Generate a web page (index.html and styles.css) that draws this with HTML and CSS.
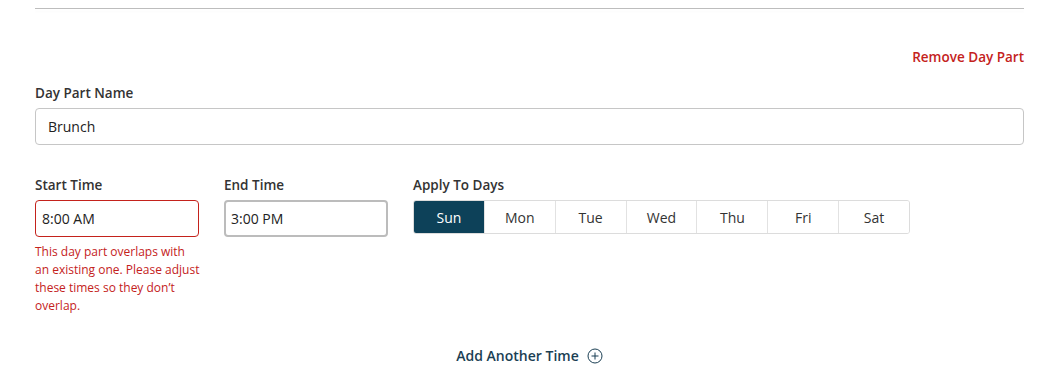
FILE: index.html
```html
<!DOCTYPE html>
<html lang="en">
<head>
    <meta charset="UTF-8">
    <meta name="viewport" content="width=device-width, initial-scale=1.0">
    <title>Day Parts</title>
    <link rel="stylesheet" href="styles.css">
</head>
<body>
    <div class="container">
        <hr class="divider">
        <div class="actions">
            <a href="#" class="remove-link">Remove Day Part</a>
        </div>
        <div class="form-group">
            <label for="dayPartName">Day Part Name</label>
            <input type="text" id="dayPartName" class="text-input" value="Brunch">
        </div>
        <div class="time-row">
            <div class="form-group time-group">
                <label for="startTime">Start Time</label>
                <input type="text" id="startTime" class="text-input time-input error" value="8:00 AM">
                <p class="error-text">This day part overlaps with an&nbsp;existing one. Please adjust these times so they don’t overlap.</p>
            </div>
            <div class="form-group time-group">
                <label for="endTime">End Time</label>
                <input type="text" id="endTime" class="text-input time-input focused" value="3:00 PM">
            </div>
            <div class="form-group">
                <label>Apply To Days</label>
                <div class="days">
                    <button type="button" class="day active">Sun</button>
                    <button type="button" class="day">Mon</button>
                    <button type="button" class="day">Tue</button>
                    <button type="button" class="day">Wed</button>
                    <button type="button" class="day">Thu</button>
                    <button type="button" class="day">Fri</button>
                    <button type="button" class="day">Sat</button>
                </div>
            </div>
        </div>
        <div class="add-row">
            <a href="#" class="add-link">Add Another Time
                <svg width="16" height="16" viewBox="0 0 16 16" fill="none" stroke="currentColor" stroke-width="1">
                    <circle cx="8" cy="8" r="7"/>
                    <path d="M8 4.5v7M4.5 8h7"/>
                </svg>
            </a>
        </div>
    </div>
</body>
</html>
```

FILE: styles.css
```css
body {
    font-family: "Open Sans", Arial, sans-serif;
    margin: 0;
    padding: 0;
    background-color: #fff;
    color: #333;
}
.container {
    padding: 8px 35px 0;
}
.divider {
    margin: 0;
    border: none;
    border-top: 1px solid #bdbdbd;
    box-shadow: 0 3px 3px rgba(0, 0, 0, 0.03);
}
.actions {
    display: flex;
    justify-content: flex-end;
    margin-top: 39px;
}
.remove-link {
    color: #c4221c;
    font-weight: 600;
    font-size: 13.5px;
    text-decoration: none;
    line-height: 18px;
}
.form-group {
    display: flex;
    flex-direction: column;
}
.form-group label {
    display: block;
    margin-top: 19px;
    margin-bottom: 6px;
    font-weight: 600;
    font-size: 13.5px;
    line-height: 17px;
    color: #333;
}
.text-input {
    box-sizing: border-box;
    height: 37px;
    padding: 0 12px;
    border: 1px solid #c6c6c6;
    border-radius: 4px;
    font-family: inherit;
    font-size: 14px;
    color: #222;
    background: #fff;
}
.time-row {
    display: flex;
    gap: 25px;
    margin-top: 13px;
}
.time-group {
    width: 164px;
}
.time-input {
    width: 164px;
    padding: 0 6px;
}
.time-input.error {
    border-color: #c4221c;
}
.time-input.focused {
    border: 2px solid #bcbcbc;
    padding: 0 5px;
}
.error-text {
    width: 168px;
    margin: 6px 0 0;
    font-size: 12px;
    line-height: 18px;
    color: #c4221c;
}
.days {
    display: flex;
    border: 1px solid #dcdcdc;
    border-radius: 3px;
    overflow: hidden;
    width: 497px;
    box-sizing: border-box;
    height: 34px;
}
.day {
    flex: 1;
    border: none;
    border-left: 1px solid #e2e2e2;
    background: #fff;
    font-family: inherit;
    font-size: 14px;
    color: #333;
    cursor: pointer;
    padding: 0;
}
.day:first-child {
    border-left: none;
}
.day.active {
    background-color: #0d4159;
    color: #fff;
}
.add-row {
    display: flex;
    justify-content: center;
    margin-top: 31px;
}
.add-link {
    display: flex;
    align-items: center;
    gap: 8px;
    color: #1b3f54;
    font-weight: 600;
    font-size: 14px;
    text-decoration: none;
}
.add-link svg {
    color: #1b3f54;
}
```
